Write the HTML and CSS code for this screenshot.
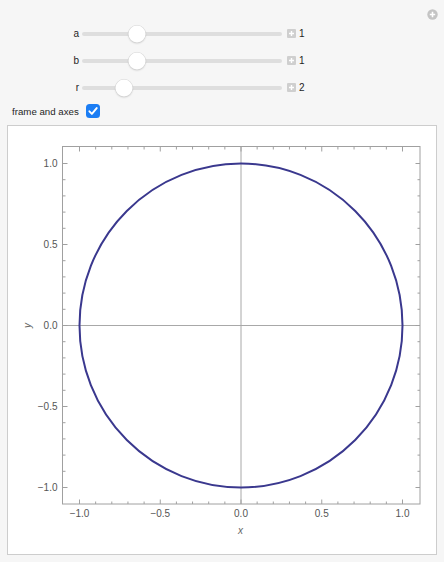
FILE: index.html
```html
<!DOCTYPE html>
<html>
<head>
<meta charset="utf-8">
<link rel="stylesheet" href="styles.css">
</head>
<body>
<div class="app">
  <svg class="corner-btn" width="11" height="11" viewBox="0 0 11 11"><circle cx="5.5" cy="5.5" r="5.2" fill="#c4c4c4"/><path d="M5.5 2.8v5.4M2.8 5.5h5.4" stroke="#fff" stroke-width="1.6"/></svg>
  <div class="controls">
    <div class="slider-row">
      <span class="label">a</span>
      <div class="track"><div class="thumb" style="left:55px"></div></div>
      <svg class="plus-btn" width="9" height="9" viewBox="0 0 9 9"><rect width="9" height="9" rx="1" fill="#cfcfcf"/><path d="M4.5 2v5M2 4.5h5" stroke="#fff" stroke-width="1.4"/></svg>
      <span class="value">1</span>
    </div>
    <div class="slider-row">
      <span class="label">b</span>
      <div class="track"><div class="thumb" style="left:55px"></div></div>
      <svg class="plus-btn" width="9" height="9" viewBox="0 0 9 9"><rect width="9" height="9" rx="1" fill="#cfcfcf"/><path d="M4.5 2v5M2 4.5h5" stroke="#fff" stroke-width="1.4"/></svg>
      <span class="value">1</span>
    </div>
    <div class="slider-row">
      <span class="label">r</span>
      <div class="track"><div class="thumb" style="left:42px"></div></div>
      <svg class="plus-btn" width="9" height="9" viewBox="0 0 9 9"><rect width="9" height="9" rx="1" fill="#cfcfcf"/><path d="M4.5 2v5M2 4.5h5" stroke="#fff" stroke-width="1.4"/></svg>
      <span class="value">2</span>
    </div>
    <div class="check-row">
      <span class="check-label">frame and axes</span>
      <svg class="checkbox" width="14" height="14" viewBox="0 0 14 14"><rect width="14" height="14" rx="3.5" fill="#1b7df4"/><path d="M3.4 7.3l2.5 2.6 4.8-5.8" fill="none" stroke="#fff" stroke-width="1.9" stroke-linecap="round" stroke-linejoin="round"/></svg>
    </div>
  </div>
  <div class="panel">
    <svg class="plot" width="428" height="428" viewBox="8 126 428 428">
      <g class="axes">
        <path d="M241 146.5V504M62.5 325.5H420"/>
      </g>
      <ellipse class="curve" cx="241" cy="325.5" rx="161.5" ry="162"/>
      <rect class="frame" x="62.5" y="146.5" width="357.5" height="357.5"/>
      <g class="ticks">
        <path d="M79.5 504v-4.5M160.25 504v-4.5M241 504v-4.5M321.75 504v-4.5M402.5 504v-4.5
                 M79.5 147v4.5M160.25 147v4.5M241 147v4.5M321.75 147v4.5M402.5 147v4.5
                 M63 163.5h4.5M63 244.5h4.5M63 325.5h4.5M63 406.5h4.5M63 487.5h4.5
                 M420 163.5h-4.5M420 244.5h-4.5M420 325.5h-4.5M420 406.5h-4.5M420 487.5h-4.5"/>
        <path class="minor" d="M95.65 504v-2.5M111.8 504v-2.5M127.95 504v-2.5M144.1 504v-2.5M176.4 504v-2.5M192.55 504v-2.5M208.7 504v-2.5M224.85 504v-2.5M257.15 504v-2.5M273.3 504v-2.5M289.45 504v-2.5M305.6 504v-2.5M337.9 504v-2.5M354.05 504v-2.5M370.2 504v-2.5M386.35 504v-2.5
                 M95.65 147v2.5M111.8 147v2.5M127.95 147v2.5M144.1 147v2.5M176.4 147v2.5M192.55 147v2.5M208.7 147v2.5M224.85 147v2.5M257.15 147v2.5M273.3 147v2.5M289.45 147v2.5M305.6 147v2.5M337.9 147v2.5M354.05 147v2.5M370.2 147v2.5M386.35 147v2.5
                 M63 179.7h2.5M63 195.9h2.5M63 212.1h2.5M63 228.3h2.5M63 260.7h2.5M63 276.9h2.5M63 293.1h2.5M63 309.3h2.5M63 341.7h2.5M63 357.9h2.5M63 374.1h2.5M63 390.3h2.5M63 422.7h2.5M63 438.9h2.5M63 455.1h2.5M63 471.3h2.5
                 M420 179.7h-2.5M420 195.9h-2.5M420 212.1h-2.5M420 228.3h-2.5M420 260.7h-2.5M420 276.9h-2.5M420 293.1h-2.5M420 309.3h-2.5M420 341.7h-2.5M420 357.9h-2.5M420 374.1h-2.5M420 390.3h-2.5M420 422.7h-2.5M420 438.9h-2.5M420 455.1h-2.5M420 471.3h-2.5"/>
      </g>
      <g class="ylabels">
        <text x="57.5" y="167">1.0</text>
        <text x="57.5" y="248">0.5</text>
        <text x="57.5" y="329">0.0</text>
        <text x="57.5" y="410">−0.5</text>
        <text x="57.5" y="491">−1.0</text>
      </g>
      <g class="xlabels">
        <text x="79.5" y="517">−1.0</text>
        <text x="160.25" y="517">−0.5</text>
        <text x="241" y="517">0.0</text>
        <text x="321.75" y="517">0.5</text>
        <text x="402.5" y="517">1.0</text>
      </g>
      <text class="axis-label" x="240.5" y="534">x</text>
      <text class="axis-label" x="0" y="0" transform="translate(30.5 325.5) rotate(-90)">y</text>
    </svg>
  </div>
</div>
</body>
</html>
```

FILE: styles.css
```css
html, body {
  margin: 0;
  padding: 0;
  background: #f6f6f6;
}
body {
  width: 444px;
  height: 562px;
  overflow: hidden;
  font-family: "Liberation Sans", Arial, Helvetica, sans-serif;
  color: #1e1e1e;
}
.app {
  position: relative;
  width: 444px;
  height: 562px;
}
.corner-btn {
  position: absolute;
  left: 427px;
  top: 9px;
}
.controls {
  padding-top: 20px;
}
.slider-row {
  display: flex;
  align-items: center;
  height: 27px;
}
.label {
  width: 79px;
  text-align: right;
  font-size: 10px;
}
.track {
  position: relative;
  width: 200px;
  height: 4px;
  margin-left: 3px;
  background: #dedede;
  border-radius: 2px;
}
.thumb {
  position: absolute;
  top: 50%;
  width: 17px;
  height: 17px;
  border-radius: 50%;
  background: #ffffff;
  box-shadow: 0 0 0 0.5px #d2d2d2, 0 1px 2px rgba(0, 0, 0, 0.18);
  transform: translate(-50%, -50%);
}
.plus-btn {
  margin-left: 5px;
  display: block;
}
.value {
  margin-left: 3px;
  font-size: 10px;
}
.check-row {
  display: flex;
  align-items: center;
  height: 20px;
  padding-left: 12px;
}
.check-label {
  font-size: 9.7px;
}
.checkbox {
  display: block;
  margin-left: 7px;
}
.panel {
  margin-top: 4px;
  margin-left: 7px;
  width: 430px;
  height: 430px;
  box-sizing: border-box;
  border: 1px solid #cdcdcd;
  background: #ffffff;
}
.plot {
  display: block;
}
.axes path {
  stroke: #a8a8a8;
  stroke-width: 1;
  fill: none;
}
.curve {
  fill: none;
  stroke: #3a388e;
  stroke-width: 2;
}
.frame {
  fill: none;
  stroke: #a0a0a0;
  stroke-width: 1;
}
.ticks path {
  stroke: #a0a0a0;
  stroke-width: 1;
  fill: none;
}
.ylabels text,
.xlabels text {
  font-family: "Liberation Sans", Arial, Helvetica, sans-serif;
  font-size: 10px;
  fill: #555555;
}
.ylabels text {
  text-anchor: end;
}
.xlabels text {
  text-anchor: middle;
}
.axis-label {
  font-family: "Liberation Sans", Arial, Helvetica, sans-serif;
  font-size: 10px;
  font-style: italic;
  fill: #666666;
  text-anchor: middle;
}
```
